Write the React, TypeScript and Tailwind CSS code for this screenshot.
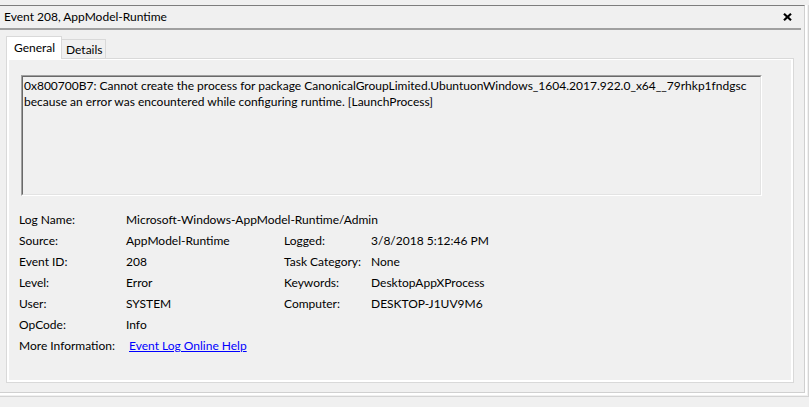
import React from 'react';

const rows: [string, string, string?, string?][] = [
  ['Source:', 'AppModel-Runtime', 'Logged:', '3/8/2018 5:12:46 PM'],
  ['Event ID:', '208', 'Task Category:', 'None'],
  ['Level:', 'Error', 'Keywords:', 'DesktopAppXProcess'],
  ['User:', 'SYSTEM', 'Computer:', 'DESKTOP-J1UV9M6'],
  ['OpCode:', 'Info'],
];

function CloseIcon() {
  return (
    <svg width="9" height="8" viewBox="0 0 9 8" className="block">
      <path d="M1 0.8 L8 7.2 M8 0.8 L1 7.2" stroke="#000" strokeWidth="2.2" fill="none" />
    </svg>
  );
}

export default function App() {
  return (
    <div className="w-[809px] h-[407px] bg-[#f0f0f0] pt-[5px] text-[12px] leading-[16px] text-black font-['Segoe_UI','Lato',sans-serif] overflow-hidden">
      <div className="h-[392px] border-r border-b border-[#d4d4d4] pr-px pb-px">
        <div className="h-full border-r-2 border-b-2 border-white">
          <div className="h-full border-t border-t-[#7d7d7d] border-r border-b border-r-[#d0d0d0] border-b-[#d0d0d0] flex flex-col">
            <div className="h-[22px] flex items-center justify-between pl-[4px] pr-[12px]">
              <span>Event 208, AppModel-Runtime</span>
              <CloseIcon />
            </div>
            <div className="h-[2px] bg-[#a0a0a0] mr-[3px]" />

            <div className="pl-[6px] pr-[10px] pt-[6px]">
              {/* tab strip */}
              <div className="flex items-end h-[22px]">
                <div className="relative z-10 self-start h-[23px] w-[56px] border border-b-0 border-[#d9d9d9] bg-white pl-[7px] pt-[3px]">
                  General
                </div>
                <div className="h-[19px] w-[44px] border-t border-r border-[#d9d9d9] bg-[#f0f0f0] pl-[4px] pt-[2px]">
                  Details
                </div>
              </div>

              {/* tab page */}
              <div className="h-[325px] border border-[#d9d9d9] bg-white pt-px px-[2px] pb-[2px]">
                <div className="h-full bg-[#f0f0f0] pl-[10px] pt-[15px]">
                  <div className="ml-[2px] w-[741px] h-[121px] border-t border-l border-t-[#a0a0a0] border-l-[#a0a0a0] border-r border-b border-r-white border-b-white">
                    <div className="h-full border-t border-l border-t-[#696969] border-l-[#696969] border-r border-b border-r-[#e3e3e3] border-b-[#e3e3e3] pl-px pt-px whitespace-nowrap overflow-hidden">
                      <p>
                        0x800700B7: Cannot create the process for package CanonicalGroupLimited.UbuntuonWindows_1604.2017.922.0_x64__79rhkp1fndgsc
                      </p>
                      <p>because an error was encountered while configuring runtime. [LaunchProcess]</p>
                    </div>
                  </div>

                  <div className="mt-[13px] grid grid-cols-[107px_158px_87px_1fr] auto-rows-[21px] items-center">
                    <span>Log Name:</span>
                    <span className="col-span-3">Microsoft-Windows-AppModel-Runtime/Admin</span>
                    {rows.map(([a, b, c, d]) => (
                      <React.Fragment key={a}>
                        <span>{a}</span>
                        <span>{b}</span>
                        <span>{c ?? ''}</span>
                        <span>{d ?? ''}</span>
                      </React.Fragment>
                    ))}
                    <span>More Information:</span>
                    <span className="col-span-3 pl-[3px]">
                      <a href="#" className="text-[#0000ff] underline">
                        Event Log Online Help
                      </a>
                    </span>
                  </div>
                </div>
              </div>
            </div>
          </div>
        </div>
      </div>
    </div>
  );
}
